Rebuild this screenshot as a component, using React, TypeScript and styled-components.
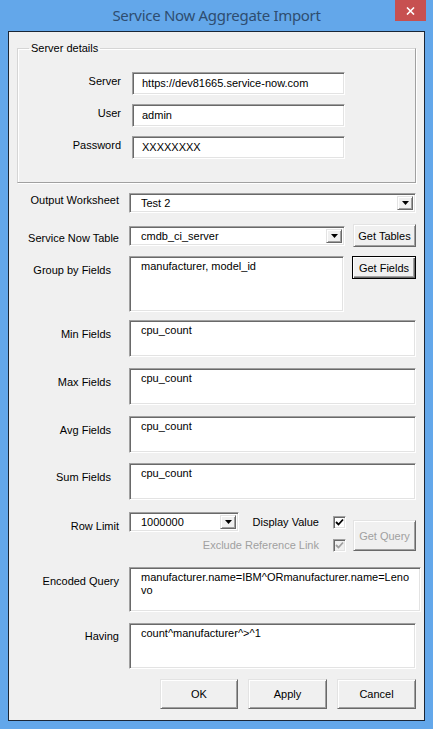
import React from 'react';
import styled, { createGlobalStyle } from 'styled-components';

const GlobalStyle = createGlobalStyle`
  html, body {
    margin: 0;
    padding: 0;
  }

  body {
    font-family: "Liberation Sans", Arial, sans-serif;
    font-size: 11px;
    color: #000;
  }
`;

const Window = styled.div`
  width: 433px;
  height: 729px;
  box-sizing: border-box;
  background: #63a7ea;
  display: flex;
  flex-direction: column;
  padding: 0 8px 8px;
`;

const TitleBar = styled.div`
  height: 31px;
  display: grid;
  grid-template-columns: 1fr auto 1fr;
  align-items: start;
`;

const Title = styled.div`
  grid-column: 2;
  font-family: "Noto Sans", "Open Sans", sans-serif;
  font-size: 15px;
  letter-spacing: -0.3px;
  line-height: 31px;
  color: #2e4d70;
  white-space: nowrap;
`;

const CloseButton = styled.div`
  grid-column: 3;
  justify-self: end;
  margin-right: -1px;
  width: 31px;
  height: 21px;
  background: #c75050;
  display: flex;
  align-items: center;
  justify-content: center;
`;

const Client = styled.div`
  flex: 1;
  background: #f0f0f0;
  border: 1px solid #1a2636;
  padding: 0 8px;
  display: flex;
  flex-direction: column;
`;

const GroupBox = styled.fieldset`
  margin: 10px 0 0;
  padding: 17px 0 23px;
  border: 1px solid;
  border-color: #d5d5d5 #a0a0a0 #a0a0a0 #d5d5d5;
  box-shadow: 1px 1px 0 #fff, inset 1px 1px 0 #fff;
  display: grid;
  grid-template-columns: 103px 213px;
  column-gap: 11px;
  row-gap: 9px;

  legend {
    margin-left: 11px;
    padding: 0 2px;
    line-height: 13px;
  }
`;

const GroupLabel = styled.div`
  text-align: right;
  line-height: 13px;
  padding-top: 3px;
`;

const Row = styled.div<{ $top: number }>`
  display: flex;
  align-items: flex-start;
  margin-top: ${({ $top }) => $top}px;
`;

const Label = styled.div<{ $drop?: number; $inset?: boolean }>`
  flex: 0 0 103px;
  box-sizing: border-box;
  text-align: right;
  line-height: 13px;
  padding-top: ${({ $drop = 8 }) => $drop}px;
  padding-right: ${({ $inset }) => ($inset ? 9 : 1)}px;
  margin-right: 9px;
  white-space: nowrap;
`;

const sunken = `
  box-sizing: border-box;
  background: #fff;
  border: 1px solid;
  border-color: #a0a0a0 #fff #fff #a0a0a0;
  box-shadow: inset 1px 1px 0 #696969, inset -1px -1px 0 #e3e3e3;
`;

const TextBox = styled.div<{ $height: number }>`
  ${sunken}
  flex: 1;
  height: ${({ $height }) => $height}px;
  padding: 3px 11px;
  line-height: 13px;
  white-space: pre;
`;

const LineInput = styled.div`
  ${sunken}
  height: 23px;
  padding: 4px 9px;
  line-height: 13px;
`;

const Combo = styled.div<{ $width?: number; $offset?: number }>`
  ${sunken}
  flex: ${({ $width }) => ($width ? `0 0 ${$width}px` : '1')};
  height: 20px;
  margin-top: ${({ $offset = 0 }) => $offset}px;
  display: flex;
  align-items: stretch;
  padding: 2px 2px 2px 11px;
`;

const ComboText = styled.div`
  flex: 1;
  line-height: 14px;
`;

const DropButton = styled.div`
  flex: 0 0 16px;
  box-sizing: border-box;
  background: #f0f0f0;
  border: 1px solid;
  border-color: #e3e3e3 #696969 #696969 #e3e3e3;
  box-shadow: inset 1px 1px 0 #fff, inset -1px -1px 0 #a0a0a0;
  display: flex;
  align-items: center;
  justify-content: center;
`;

const Button = styled.div<{ $width: number; $height: number; $default?: boolean; $disabled?: boolean }>`
  flex: 0 0 ${({ $width }) => $width}px;
  height: ${({ $height }) => $height}px;
  box-sizing: border-box;
  background: #f0f0f0;
  border: 1px solid;
  border-color: ${({ $default }) =>
    $default ? '#000' : '#e3e3e3 #696969 #696969 #e3e3e3'};
  box-shadow: ${({ $default }) =>
    $default
      ? 'inset 1px 1px 0 #fff, inset -1px -1px 0 #696969, inset -2px -2px 0 #a0a0a0'
      : 'inset 1px 1px 0 #fff, inset -1px -1px 0 #a0a0a0'};
  color: ${({ $disabled }) => ($disabled ? '#a0a0a0' : '#000')};
  display: flex;
  align-items: center;
  justify-content: center;
  white-space: nowrap;
`;

const SideButton = styled(Button)`
  margin-left: 8px;
`;

const CheckColumn = styled.div`
  flex: 1;
  min-width: 0;
  display: flex;
  flex-direction: column;
  align-items: flex-end;
  gap: 10px;
  padding-top: 4px;
`;

const CheckRow = styled.div<{ $disabled?: boolean }>`
  display: flex;
  align-items: center;
  gap: 14px;
  line-height: 13px;
  white-space: nowrap;
  color: ${({ $disabled }) => ($disabled ? '#a0a0a0' : '#000')};
`;

const CheckBox = styled.div<{ $disabled?: boolean }>`
  ${sunken}
  flex: 0 0 13px;
  width: 13px;
  height: 13px;
  background: ${({ $disabled }) => ($disabled ? '#f0f0f0' : '#fff')};
  display: flex;
  align-items: center;
  justify-content: center;
`;

const QueryButton = styled(Button)`
  margin-left: 7px;
  margin-top: 8px;
`;

const ButtonBar = styled.div`
  display: flex;
  justify-content: flex-end;
  gap: 10px;
  margin-top: 10px;
`;

function Arrow() {
  return (
    <svg width="7" height="4" viewBox="0 0 7 4">
      <path d="M0 0h7L3.5 4z" fill="#000" />
    </svg>
  );
}

function Tick({ color }: { color: string }) {
  return (
    <svg width="9" height="9" viewBox="0 0 9 9">
      <path d="M1 4l2.5 2.5L8 1.5" stroke={color} strokeWidth="1.8" fill="none" />
    </svg>
  );
}

function App() {
  return (
    <Window>
      <GlobalStyle />
      <TitleBar>
        <Title>Service Now Aggregate Import</Title>
        <CloseButton>
          <svg width="9" height="8" viewBox="0 0 9 8">
            <path d="M1 0.5l7 7M8 0.5l-7 7" stroke="#fff" strokeWidth="1.6" />
          </svg>
        </CloseButton>
      </TitleBar>
      <Client>
        <GroupBox>
          <legend>Server details</legend>
          <GroupLabel>Server</GroupLabel>
          <LineInput>https://dev81665.service-now.com</LineInput>
          <GroupLabel>User</GroupLabel>
          <LineInput>admin</LineInput>
          <GroupLabel>Password</GroupLabel>
          <LineInput>XXXXXXXX</LineInput>
        </GroupBox>

        <Row $top={10}>
          <Label $drop={1}>Output Worksheet</Label>
          <Combo>
            <ComboText>Test 2</ComboText>
            <DropButton><Arrow /></DropButton>
          </Combo>
        </Row>

        <Row $top={11}>
          <Label>Service Now Table</Label>
          <Combo $offset={2}>
            <ComboText>cmdb_ci_server</ComboText>
            <DropButton><Arrow /></DropButton>
          </Combo>
          <SideButton $width={63} $height={23}>Get Tables</SideButton>
        </Row>

        <Row $top={9}>
          <Label $inset>Group by Fields</Label>
          <TextBox $height={56}>manufacturer, model_id</TextBox>
          <SideButton $width={64} $height={23} $default>Get Fields</SideButton>
        </Row>

        <Row $top={8}>
          <Label $inset>Min Fields</Label>
          <TextBox $height={37}>cpu_count</TextBox>
        </Row>
        <Row $top={11}>
          <Label $inset>Max Fields</Label>
          <TextBox $height={37}>cpu_count</TextBox>
        </Row>
        <Row $top={11}>
          <Label $inset>Avg Fields</Label>
          <TextBox $height={37}>cpu_count</TextBox>
        </Row>
        <Row $top={10}>
          <Label $inset>Sum Fields</Label>
          <TextBox $height={37}>cpu_count</TextBox>
        </Row>

        <Row $top={12}>
          <Label>Row Limit</Label>
          <Combo $width={110}>
            <ComboText>1000000</ComboText>
            <DropButton><Arrow /></DropButton>
          </Combo>
          <CheckColumn>
            <CheckRow>
              Display Value
              <CheckBox><Tick color="#000" /></CheckBox>
            </CheckRow>
            <CheckRow $disabled>
              Exclude Reference Link
              <CheckBox $disabled><Tick color="#a0a0a0" /></CheckBox>
            </CheckRow>
          </CheckColumn>
          <QueryButton $width={63} $height={31} $disabled>Get Query</QueryButton>
        </Row>

        <Row $top={15}>
          <Label>Encoded Query</Label>
          <TextBox $height={45}>
            manufacturer.name=IBM^ORmanufacturer.name=Leno{'\n'}vo
          </TextBox>
        </Row>
        <Row $top={11}>
          <Label $drop={7}>Having</Label>
          <TextBox $height={46}>count^manufacturer^&gt;^1</TextBox>
        </Row>

        <ButtonBar>
          <Button $width={78} $height={30}>OK</Button>
          <Button $width={79} $height={30}>Apply</Button>
          <Button $width={79} $height={30}>Cancel</Button>
        </ButtonBar>
      </Client>
    </Window>
  );
}

export default App;
